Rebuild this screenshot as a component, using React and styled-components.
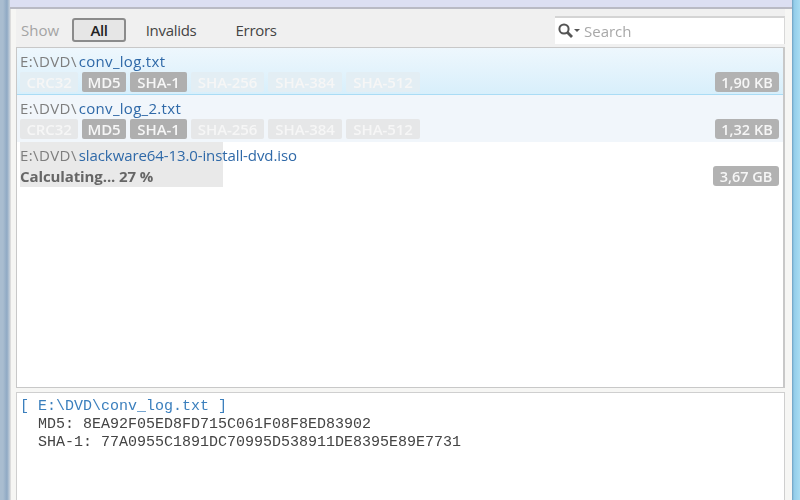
import React from 'react';
import styled, { createGlobalStyle } from 'styled-components';

const Global = createGlobalStyle`
  html, body { margin: 0; padding: 0; background: #fff; overflow: hidden; }
`;

const Win = styled.div`
  width: 800px;
  height: 500px;
  display: flex;
  overflow: hidden;
  filter: blur(0.7px);
  font-family: "Open Sans", "Liberation Sans", sans-serif;
`;

const FrameLeft = styled.div`
  width: 10px;
  flex: none;
  background: linear-gradient(to right, #a9bdd0 0, #a9bdd0 3px, #8fa9c4 7px, #c8d2dc 10px);
`;

const FrameRight = styled.div`
  width: 8px;
  flex: none;
  background: linear-gradient(to right, #6f9fc0 0, #93cdea 2px, #a8dcf2 8px);
`;

const Main = styled.div`
  flex: 1;
  min-width: 0;
  display: flex;
  flex-direction: column;
  background: #f3f3f1;
`;

const TitleStrip = styled.div`
  height: 7px;
  flex: none;
  background: #dcdff2;
  border-bottom: 2px solid #b9bac4;
`;

const Content = styled.div`
  flex: 1;
  min-height: 0;
  display: flex;
  flex-direction: column;
  padding: 0 7px 0 5px;
  border-left: 1px solid #dcdcdc;
  background: #f6f6f4;
`;

const Toolbar = styled.div`
  height: 38px;
  flex: none;
  box-sizing: border-box;
  padding-top: 4px;
  display: flex;
  align-items: center;
  background: #f0f0f0;
  font-size: 15px;
`;

const ShowLabel = styled.span`
  color: #a4a4a4;
  margin: 0 13px 0 5px;
`;

const FilterButton = styled.div`
  height: 24px;
  width: ${(p) => p.$w}px;
  display: flex;
  align-items: center;
  justify-content: center;
  color: #444;
  letter-spacing: -0.3px;
  box-sizing: border-box;
  border-radius: 3px;
  ${(p) =>
    p.$active &&
    `border: 2px solid #8b8b8b;
     background: #e6e6e6;
     color: #222;
     font-weight: 600;`}
`;

const SearchBox = styled.div`
  width: 230px;
  height: 28px;
  margin-left: auto;
  display: flex;
  align-items: center;
  gap: 3px;
  padding-left: 2px;
  box-sizing: border-box;
  background: #fff;
  border-top: 2px solid #d4d4d4;
  border-right: 1px solid #d8d8d8;
  color: #a8a8a8;
`;

const List = styled.div`
  height: 341px;
  flex: none;
  background: #fff;
  border: 1px solid #c8c8c8;
  border-right-width: 2px;
  box-sizing: border-box;
  display: flex;
  flex-direction: column;
`;

const Row = styled.div`
  height: ${(p) => p.$h}px;
  flex: none;
  box-sizing: border-box;
  padding: 3px 4px 0 3px;
  ${(p) =>
    p.$variant === 'selected' &&
    `background: linear-gradient(#eef7fd, #d8effb);
     border-bottom: 1px solid #aadcf5;`}
  ${(p) => p.$variant === 'hover' && `background: #f1f6fb;`}
  ${(p) =>
    p.$progress &&
    `background: linear-gradient(#e9e9e9, #e9e9e9) no-repeat 3px 0 / ${p.$progress}px 100%;`}
`;

const PathLine = styled.div`
  font-size: 15px;
  line-height: 21px;
  height: 21px;
  white-space: nowrap;
  color: #7e7e7e;
`;

const Prefix = styled.span`
  letter-spacing: 0.4px;
`;

const FileName = styled.span`
  color: #2f69a8;
  margin-left: 2px;
  letter-spacing: ${(p) => p.$track || 0}px;
`;

const Meta = styled.div`
  display: flex;
  align-items: center;
  height: 20px;
`;

const Chips = styled.div`
  display: flex;
  gap: 4px;
`;

const Chip = styled.span`
  height: 20px;
  width: ${(p) => p.$w}px;
  display: flex;
  align-items: center;
  justify-content: center;
  border-radius: 2px;
  font-size: 15px;
  font-weight: 600;
  letter-spacing: -0.1px;
  color: #f6f6f6;
  background: ${(p) => (p.$on ? '#afafaf' : p.$soft ? '#e6e7e8' : '#e3eef4')};
`;

const SizeTag = styled.span`
  margin-left: auto;
  height: 20px;
  width: ${(p) => p.$w}px;
  display: flex;
  align-items: center;
  justify-content: center;
  border-radius: 3px;
  background: #b2b2b2;
  color: #f6f6f6;
  font-size: 14.5px;
  font-weight: 600;
`;

const Calculating = styled.span`
  font-size: 15px;
  font-weight: 700;
  color: #666;
  letter-spacing: -0.1px;
`;

const Details = styled.div`
  flex: 1;
  min-height: 0;
  margin-top: 4px;
  background: #fff;
  border: 1px solid #cfcfcf;
  border-bottom: none;
  padding: 5px 3px;
  font-family: "Liberation Mono", monospace;
  font-size: 15px;
  line-height: 18px;
  color: #444;
  white-space: pre;
`;

const DetailHead = styled.div`
  color: #3b7fbd;
`;

const SearchIcon = () => (
  <svg width="24" height="18" viewBox="0 0 24 18" fill="none">
    <circle cx="7" cy="7" r="4.6" stroke="#555" strokeWidth="2" />
    <path d="M10 10l5 5" stroke="#555" strokeWidth="2.8" />
    <path d="M17 7h6l-3 3z" fill="#555" />
  </svg>
);

const hashes = [
  ['CRC32', 58],
  ['MD5', 44],
  ['SHA-1', 57],
  ['SHA-256', 73],
  ['SHA-384', 74],
  ['SHA-512', 74],
];

const HashRow = ({ name, size, sizeW, variant, h, soft }) => (
  <Row $variant={variant} $h={h}>
    <PathLine>
      <Prefix>E:\DVD\</Prefix>
      <FileName $track={0.3}>{name}</FileName>
    </PathLine>
    <Meta>
      <Chips>
        {hashes.map(([label, w]) => (
          <Chip key={label} $w={w} $soft={soft} $on={label === 'MD5' || label === 'SHA-1'}>
            {label}
          </Chip>
        ))}
      </Chips>
      <SizeTag $w={sizeW}>{size}</SizeTag>
    </Meta>
  </Row>
);

export default function App() {
  return (
    <>
      <Global />
      <Win>
        <FrameLeft />
        <Main>
          <TitleStrip />
          <Content>
            <Toolbar>
              <ShowLabel>Show</ShowLabel>
              <FilterButton $active $w={54}>All</FilterButton>
              <FilterButton $w={90}>Invalids</FilterButton>
              <FilterButton $w={80}>Errors</FilterButton>
              <SearchBox>
                <SearchIcon />
                Search
              </SearchBox>
            </Toolbar>
            <List>
              <HashRow name="conv_log.txt" size="1,90 KB" sizeW={64} variant="selected" h={47} />
              <HashRow name="conv_log_2.txt" size="1,32 KB" sizeW={64} variant="hover" h={47} soft />
              <Row $progress={203} $h={45}>
                <PathLine>
                  <Prefix>E:\DVD\</Prefix>
                  <FileName $track={-0.1}>slackware64-13.0-install-dvd.iso</FileName>
                </PathLine>
                <Meta>
                  <Calculating>Calculating... 27 %</Calculating>
                  <SizeTag $w={66}>3,67 GB</SizeTag>
                </Meta>
              </Row>
            </List>
            <Details>
              <DetailHead>[ E:\DVD\conv_log.txt ]</DetailHead>
              {'  MD5: 8EA92F05ED8FD715C061F08F8ED83902\n  SHA-1: 77A0955C1891DC70995D538911DE8395E89E7731'}
            </Details>
          </Content>
        </Main>
        <FrameRight />
      </Win>
    </>
  );
}
